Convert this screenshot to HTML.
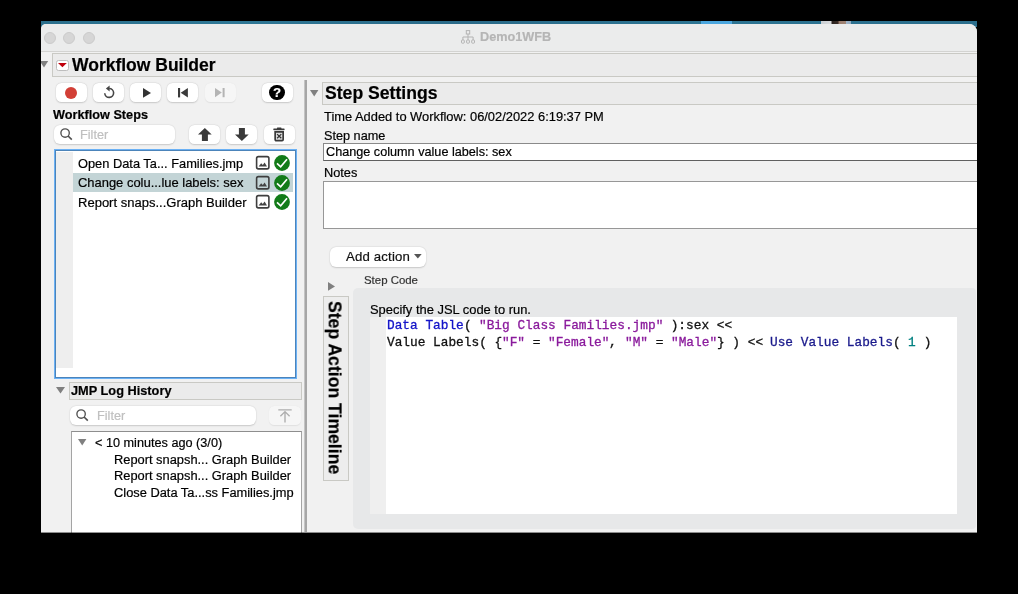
<!DOCTYPE html>
<html><head><meta charset="utf-8"><title>Demo1WFB</title>
<style>
html,body{margin:0;padding:0;background:#000;}
body{width:1018px;height:594px;position:relative;overflow:hidden;font-family:"Liberation Sans",sans-serif;}
.a{position:absolute;box-sizing:border-box;}
.t{position:absolute;white-space:pre;line-height:1;will-change:transform;-webkit-text-stroke:0.2px currentColor;}
.m{font-family:"Liberation Mono",monospace;-webkit-text-stroke:0.3px currentColor;}
.btn{position:absolute;box-sizing:border-box;background:#fff;border-radius:5.5px;box-shadow:0 0.6px 1.6px rgba(0,0,0,.16),0 0 0 0.5px rgba(0,0,0,.035);}
.btn.dis{background:#f6f6f6;box-shadow:0 0.5px 1.2px rgba(0,0,0,.07);}
.hdr{position:absolute;box-sizing:border-box;background:#ebebeb;border:1px solid #c9c9c4;}
svg{position:absolute;overflow:visible;}
</style></head><body>
<div class="a" style="left:41px;top:21px;width:936px;height:6px;background:linear-gradient(90deg,#2b6f8c 0%,#2f7896 20%,#2a6a88 45%,#2d7593 70%,#2b6e8c 100%);"></div>
<div class="a" style="left:700.5px;top:21px;width:31.5px;height:3px;background:#4ba6de;"></div>
<div class="a" style="left:821px;top:21px;width:30px;height:3px;background:linear-gradient(90deg,#c9ced2 0,#d8dadc 33%,#2a2320 37%,#3a2c26 57%,#9a7c6c 60%,#a08474 82%,#9fb4c8 85%,#8fa9c0 100%);"></div>
<div class="a" id="win" style="left:41px;top:24px;width:936px;height:509px;background:#f1f1f1;border-radius:5px 8px 0 0;overflow:hidden;"></div>
<div class="a" style="left:41px;top:24px;width:936px;height:28px;background:#ebecec;border-radius:5px 8px 0 0;border-bottom:1px solid #d3d3d1;"></div>
<div class="a" style="left:44.0px;top:31.8px;width:12px;height:12px;border-radius:50%;background:#d6d6d6;border:0.5px solid #cbcbcb;"></div>
<div class="a" style="left:63.3px;top:31.8px;width:12px;height:12px;border-radius:50%;background:#d6d6d6;border:0.5px solid #cbcbcb;"></div>
<div class="a" style="left:82.9px;top:31.8px;width:12px;height:12px;border-radius:50%;background:#d6d6d6;border:0.5px solid #cbcbcb;"></div>
<svg style="left:461px;top:29.5px" width="14" height="14" viewBox="0 0 14 14" fill="none" stroke="#b3b3b3" stroke-width="1">
<rect x="5.3" y="0.6" width="3.4" height="3.4"/><path d="M7 4v3M1.9 10V7h10.2v3M7 7v3"/>
<rect x="0.5" y="10" width="2.8" height="3.2" rx="0.8"/><rect x="5.6" y="10" width="2.8" height="3.2" rx="0.8"/><rect x="10.7" y="10" width="2.8" height="3.2" rx="0.8"/></svg>
<span class="t" style="left:480.30px;top:31.05px;font-size:12.7px;font-weight:bold;color:#b5b5b5;">Demo1WFB</span>
<div class="hdr" style="left:52px;top:53px;width:930px;height:24px;"></div>
<svg style="left:41px;top:61px;overflow:hidden" width="8" height="7"><path d="M-1.2 0H7.2L3 6.6Z" fill="#808080"/></svg>
<div class="a" style="left:56px;top:59.5px;width:13px;height:11px;background:#fff;border:1px solid #bdbdbd;border-radius:2.5px;"></div>
<svg style="left:58px;top:62.6px" width="9" height="5"><path d="M0 0H8.8L4.4 4.2Z" fill="#c0000c"/></svg>
<span class="t" style="left:72.00px;top:57.19px;font-size:17.5px;font-weight:bold;color:#000;">Workflow Builder</span>
<div class="btn" style="left:55.7px;top:82.8px;width:31.3px;height:19.2px;"></div>
<div class="btn" style="left:92.7px;top:82.8px;width:31.3px;height:19.2px;"></div>
<div class="btn" style="left:129.8px;top:82.8px;width:31.3px;height:19.2px;"></div>
<div class="btn" style="left:167.2px;top:82.8px;width:31.3px;height:19.2px;"></div>
<div class="btn dis" style="left:204.7px;top:82.8px;width:31.3px;height:19.2px;"></div>
<div class="btn" style="left:261.5px;top:82.8px;width:31.5px;height:19.2px;"></div>
<div class="a" style="left:65.1px;top:86.6px;width:12.3px;height:12.3px;border-radius:50%;background:#d23f36;"></div>
<svg style="left:102.6px;top:86px" width="12" height="13" viewBox="0 0 12 13"><path d="M6.17 2.48A4.45 4.45 0 1 1 1.73 7.3" fill="none" stroke="#464646" stroke-width="1.6"/><path d="M6.6 -0.5V5.5L2.9 2.5Z" fill="#464646"/></svg>
<svg style="left:143.3px;top:87.9px" width="8" height="10"><path d="M0 0L8 4.9L0 9.8Z" fill="#333"/></svg>
<svg style="left:178.1px;top:87.9px" width="10" height="10"><rect x="0" y="0" width="2.1" height="9.4" fill="#3a3a3a"/><path d="M9.9 0V9.4L2.7 4.7Z" fill="#3a3a3a"/></svg>
<svg style="left:215.4px;top:87.9px" width="10" height="10"><rect x="7.6" y="0" width="2" height="9.2" fill="#b4b4b4"/><path d="M0 0V9.2L6.8 4.6Z" fill="#b4b4b4"/></svg>
<div class="a" style="left:269.4px;top:84.5px;width:15.4px;height:15.4px;border-radius:50%;background:#000;"></div>
<span class="t" style="left:273.10px;top:85.93px;font-size:13.2px;font-weight:bold;color:#fff;">?</span>
<span class="t" style="left:53.00px;top:108.95px;font-size:12.7px;font-weight:bold;color:#000;">Workflow Steps</span>
<div class="btn" style="left:54px;top:125px;width:120.7px;height:19px;border-radius:6px;"></div>
<svg style="left:60.4px;top:128.2px" width="12" height="12" viewBox="0 0 12 12"><circle cx="5.1" cy="5.0" r="4.2" fill="none" stroke="#505050" stroke-width="1.35"/><path d="M8.1 8.0L11.8 11.6" stroke="#505050" stroke-width="1.6"/></svg>
<span class="t" style="left:80.40px;top:128.85px;font-size:12.7px;font-weight:normal;color:#bfbfbf;">Filter</span>
<div class="btn" style="left:188.8px;top:124.8px;width:31.3px;height:19.1px;"></div>
<div class="btn" style="left:226.0px;top:124.8px;width:31.3px;height:19.1px;"></div>
<div class="btn" style="left:263.7px;top:124.8px;width:31.3px;height:19.1px;"></div>
<svg style="left:197.9px;top:128px" width="14" height="13"><path d="M6.85 0L13.7 6.5H9.9V13H3.9V6.5H0Z" fill="#3a3a3a"/></svg>
<svg style="left:235.0px;top:128px" width="14" height="13"><path d="M6.85 13L13.7 6.5H9.9V0H3.9V6.5H0Z" fill="#3a3a3a"/></svg>
<svg style="left:273px;top:127px" width="12" height="15" viewBox="0 0 12 15">
<rect x="3.9" y="0.6" width="4.6" height="1.6" rx="0.6" fill="#3a3a3a"/><rect x="0.3" y="1.5" width="11.3" height="1.7" rx="0.6" fill="#3a3a3a"/>
<path d="M2.15 4.9H10.15V12.5a1.1 1.1 0 0 1 -1.1 1.1H3.25a1.1 1.1 0 0 1 -1.1 -1.1Z" fill="#dedede" stroke="#3a3a3a" stroke-width="1.7" stroke-linejoin="miter"/>
<path d="M4.1 7.1L8.3 11.3M8.3 7.1L4.1 11.3" stroke="#333" stroke-width="1.25"/></svg>
<div class="a" style="left:54px;top:149px;width:243px;height:230px;background:#fff;border:1px solid #6bb1f5;box-shadow:inset 0 0 0 1px #4c84ba;"></div>
<div class="a" style="left:56.4px;top:152px;width:16.7px;height:215.6px;background:#eeeeee;"></div>
<div class="a" style="left:73.3px;top:173.1px;width:219.5px;height:18.6px;background:#c3d4d6;"></div>
<span class="t" style="left:78.20px;top:157.64px;font-size:12.83px;font-weight:normal;color:#000;">Open Data Ta... Families.jmp</span>
<svg style="left:255.8px;top:156.2px" width="14" height="14" viewBox="0 0 14 14"><rect x="0.6" y="0.6" width="12.3" height="12.3" rx="1.8" fill="none" stroke="#3e3e3e" stroke-width="1.6"/><path d="M2.6 10.4L5.2 7.2L6.8 9L8.6 6.6L11 10.4Z" fill="#444"/></svg>
<svg style="left:274.1px;top:155.0px" width="16" height="16" viewBox="0 0 16 16"><circle cx="8" cy="8" r="7.9" fill="#127b18"/><path d="M3.0 8.3L6.7 11.8L13.0 4.3" fill="none" stroke="#fff" stroke-width="1.7"/></svg>
<span class="t" style="left:78.20px;top:177.44px;font-size:12.95px;font-weight:normal;color:#000;">Change colu...lue labels: sex</span>
<svg style="left:255.8px;top:175.7px" width="14" height="14" viewBox="0 0 14 14"><rect x="0.6" y="0.6" width="12.3" height="12.3" rx="1.8" fill="none" stroke="#3e3e3e" stroke-width="1.6"/><path d="M2.6 10.4L5.2 7.2L6.8 9L8.6 6.6L11 10.4Z" fill="#444"/></svg>
<svg style="left:274.1px;top:174.5px" width="16" height="16" viewBox="0 0 16 16"><circle cx="8" cy="8" r="7.9" fill="#127b18"/><path d="M3.0 8.3L6.7 11.8L13.0 4.3" fill="none" stroke="#fff" stroke-width="1.7"/></svg>
<span class="t" style="left:78.20px;top:195.97px;font-size:13.03px;font-weight:normal;color:#000;">Report snaps...Graph Builder</span>
<svg style="left:255.8px;top:195.2px" width="14" height="14" viewBox="0 0 14 14"><rect x="0.6" y="0.6" width="12.3" height="12.3" rx="1.8" fill="none" stroke="#3e3e3e" stroke-width="1.6"/><path d="M2.6 10.4L5.2 7.2L6.8 9L8.6 6.6L11 10.4Z" fill="#444"/></svg>
<svg style="left:274.1px;top:194.0px" width="16" height="16" viewBox="0 0 16 16"><circle cx="8" cy="8" r="7.9" fill="#127b18"/><path d="M3.0 8.3L6.7 11.8L13.0 4.3" fill="none" stroke="#fff" stroke-width="1.7"/></svg>
<svg style="left:56.3px;top:387.4px" width="9" height="7"><path d="M0 0H9L4.5 6.4Z" fill="#808080"/></svg>
<div class="hdr" style="left:68.6px;top:382.4px;width:233.8px;height:17.3px;"></div>
<span class="t" style="left:70.80px;top:385.18px;font-size:12.78px;font-weight:bold;color:#000;">JMP Log History</span>
<div class="btn" style="left:70.3px;top:406.1px;width:185.5px;height:19.1px;border-radius:6px;"></div>
<svg style="left:76.4px;top:409.3px" width="12" height="12" viewBox="0 0 12 12"><circle cx="5.1" cy="5.0" r="4.2" fill="none" stroke="#505050" stroke-width="1.35"/><path d="M8.1 8.0L11.8 11.6" stroke="#505050" stroke-width="1.6"/></svg>
<span class="t" style="left:97.00px;top:410.05px;font-size:12.7px;font-weight:normal;color:#bfbfbf;">Filter</span>
<div class="btn dis" style="left:268.9px;top:406.1px;width:32px;height:19.1px;"></div>
<svg style="left:278px;top:409px" width="14" height="14" viewBox="0 0 14 14" fill="none" stroke="#adadad" stroke-width="1.35"><path d="M0.3 0.8H13.7M7 2.8V13.4M2.4 7.2L7 2.6L11.6 7.2"/></svg>
<div class="a" style="left:71.1px;top:431.2px;width:231px;height:110px;background:#fff;border:1px solid #a4a4a4;border-top-color:#8e8e8e;"></div>
<svg style="left:77.9px;top:439px" width="9" height="7"><path d="M0 0H8.4L4.2 6.6Z" fill="#808080"/></svg>
<span class="t" style="left:95.20px;top:437.47px;font-size:12.68px;font-weight:normal;color:#000;">&lt; 10 minutes ago (3/0)</span>
<span class="t" style="left:114.10px;top:453.72px;font-size:12.85px;font-weight:normal;color:#000;">Report snapsh... Graph Builder</span>
<span class="t" style="left:114.10px;top:470.42px;font-size:12.85px;font-weight:normal;color:#000;">Report snapsh... Graph Builder</span>
<span class="t" style="left:114.10px;top:487.12px;font-size:12.85px;font-weight:normal;color:#000;">Close Data Ta...ss Families.jmp</span>
<div class="a" style="left:304px;top:80px;width:3px;height:452px;background:linear-gradient(90deg,#c4c4c4 0,#c4c4c4 33%,#a6a6a6 33%,#a6a6a6 100%);"></div>
<svg style="left:310.3px;top:89.6px" width="9" height="7"><path d="M0 0H8.4L4.2 6.4Z" fill="#808080"/></svg>
<div class="hdr" style="left:322px;top:82px;width:660px;height:23px;"></div>
<span class="t" style="left:325.30px;top:85.40px;font-size:17.6px;font-weight:bold;color:#000;">Step Settings</span>
<span class="t" style="left:324.00px;top:110.89px;font-size:12.89px;font-weight:normal;color:#000;">Time Added to Workflow: 06/02/2022 6:19:37 PM</span>
<span class="t" style="left:324.00px;top:129.65px;font-size:12.7px;font-weight:normal;color:#000;">Step name</span>
<div class="a" style="left:323.2px;top:143.4px;width:660px;height:17.2px;background:#fff;border:1px solid #8a8a8a;border-bottom-color:#606060;"></div>
<span class="t" style="left:325.50px;top:146.27px;font-size:12.67px;font-weight:normal;color:#000;">Change column value labels: sex</span>
<span class="t" style="left:323.50px;top:166.61px;font-size:12.75px;font-weight:normal;color:#000;">Notes</span>
<div class="a" style="left:323.2px;top:181px;width:660px;height:48px;background:#fff;border:1px solid #979797;"></div>
<div class="btn" style="left:329.8px;top:247.1px;width:96.5px;height:20.2px;border-radius:6px;"></div>
<span class="t" style="left:346.20px;top:250.33px;font-size:13.2px;font-weight:normal;color:#111;letter-spacing:0.17px;">Add action</span>
<svg style="left:414px;top:254px" width="8" height="5"><path d="M0 0H7.7L3.85 4.5Z" fill="#555"/></svg>
<span class="t" style="left:363.60px;top:275.22px;font-size:11.43px;font-weight:normal;color:#333;">Step Code</span>
<svg style="left:327.8px;top:281.7px" width="8" height="9"><path d="M0 0L7 4.4L0 8.8Z" fill="#808080"/></svg>
<div class="a" style="left:353px;top:287.5px;width:623px;height:241.5px;background:#e7e8e9;border-radius:5px 4px 4px 5px;"></div>
<span class="t" style="left:370.30px;top:304.37px;font-size:12.91px;font-weight:normal;color:#000;">Specify the JSL code to run.</span>
<div class="a" style="left:370.3px;top:316.8px;width:20px;height:197.3px;background:#efefef;"></div>
<div class="a" style="left:386.3px;top:316.8px;width:571px;height:197.3px;background:#fff;"></div>
<div class="a" style="left:323px;top:296px;width:26px;height:185px;background:#ededed;border:1px solid #c9c9c4;"></div>
<span class="t" style="left:325.4px;top:300.8px;font-size:17.62px;font-weight:bold;transform-origin:0 0;transform:rotate(90deg) translate(0,-100%);margin-top:0;">Step Action Timeline</span>
<span class="t m" style="left:387.00px;top:320.26px;font-size:12.8px;font-weight:normal;color:#1414c8;">Data Table</span>
<span class="t m" style="left:463.65px;top:320.26px;font-size:12.8px;font-weight:normal;color:#111;">( </span>
<span class="t m" style="left:478.98px;top:320.26px;font-size:12.8px;font-weight:normal;color:#8a1a9c;">"Big Class Families.jmp"</span>
<span class="t m" style="left:662.94px;top:320.26px;font-size:12.8px;font-weight:normal;color:#111;"> ):sex &lt;&lt;</span>
<span class="t m" style="left:387.00px;top:337.06px;font-size:12.8px;font-weight:normal;color:#111;">Value Labels( {</span>
<span class="t m" style="left:501.98px;top:337.06px;font-size:12.8px;font-weight:normal;color:#8a1a9c;">"F"</span>
<span class="t m" style="left:524.97px;top:337.06px;font-size:12.8px;font-weight:normal;color:#111;"> = </span>
<span class="t m" style="left:547.97px;top:337.06px;font-size:12.8px;font-weight:normal;color:#8a1a9c;">"Female"</span>
<span class="t m" style="left:609.28px;top:337.06px;font-size:12.8px;font-weight:normal;color:#111;">, </span>
<span class="t m" style="left:624.62px;top:337.06px;font-size:12.8px;font-weight:normal;color:#8a1a9c;">"M"</span>
<span class="t m" style="left:647.61px;top:337.06px;font-size:12.8px;font-weight:normal;color:#111;"> = </span>
<span class="t m" style="left:670.61px;top:337.06px;font-size:12.8px;font-weight:normal;color:#8a1a9c;">"Male"</span>
<span class="t m" style="left:716.60px;top:337.06px;font-size:12.8px;font-weight:normal;color:#111;">} ) &lt;&lt; </span>
<span class="t m" style="left:770.25px;top:337.06px;font-size:12.8px;font-weight:normal;color:#1a1a8c;">Use Value Labels</span>
<span class="t m" style="left:892.89px;top:337.06px;font-size:12.8px;font-weight:normal;color:#111;">( </span>
<span class="t m" style="left:908.22px;top:337.06px;font-size:12.8px;font-weight:normal;color:#008080;">1</span>
<span class="t m" style="left:915.88px;top:337.06px;font-size:12.8px;font-weight:normal;color:#111;"> )</span>
<div class="a" style="left:977px;top:0;width:41px;height:594px;background:#000;"></div>
<div class="a" style="left:41px;top:532px;width:936px;height:1px;background:rgba(0,0,0,0.42);"></div>
<div class="a" style="left:0;top:533px;width:1018px;height:61px;background:#000;"></div>
</body></html>
